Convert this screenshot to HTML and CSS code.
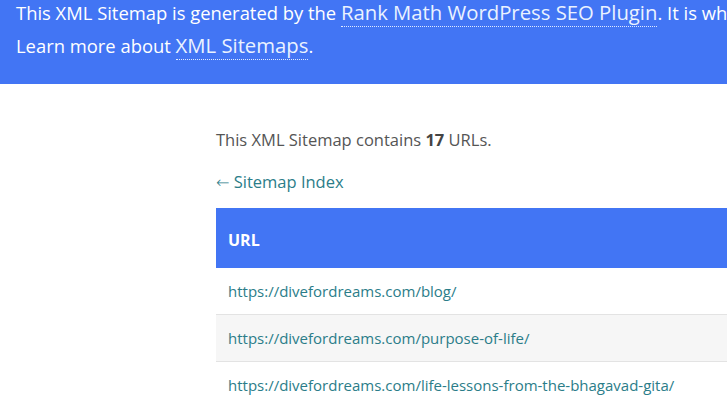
FILE: index.html
```
<!DOCTYPE html>
<html lang="en">
<head>
<meta charset="utf-8">
<title>XML Sitemap</title>
<link rel="stylesheet" href="styles.css">
</head>
<body>
<header class="description">
  <p class="desc-line">This XML Sitemap is generated by the <a class="desc-link" href="#">Rank Math WordPress SEO Plugin</a>. It is what search engines like Google use to crawl and re-crawl posts/pages/products/images/archives on your website.</p>
  <p class="desc-line">Learn more about <a class="desc-link" href="#">XML Sitemaps</a>.</p>
</header>
<main class="content">
  <p class="count">This XML Sitemap contains <strong class="count-num">17</strong> URLs.</p>
  <p class="back"><a class="back-link" href="#"><span class="arrow">&larr;</span> Sitemap Index</a></p>
  <table class="sitemap-table">
    <thead>
      <tr><th class="col-url">URL</th></tr>
    </thead>
    <tbody>
      <tr><td class="loc"><a class="loc-link" href="#">https://divefordreams.com/blog/</a></td></tr>
      <tr><td class="loc"><a class="loc-link" href="#">https://divefordreams.com/purpose-of-life/</a></td></tr>
      <tr><td class="loc"><a class="loc-link" href="#">https://divefordreams.com/life-lessons-from-the-bhagavad-gita/</a></td></tr>
    </tbody>
  </table>
</main>
</body>
</html>
```
FILE: styles.css
```
html {
  overflow: hidden;
}
body {
  margin: 0;
  font-family: "Open Sans", "Noto Sans", sans-serif;
  color: #555;
  background: #fff;
}
.description {
  box-sizing: border-box;
  height: 84px;
  padding: 0 16px;
  background: #4275f4;
  color: #fff;
  display: flex;
  flex-direction: column;
  gap: 8px;
  overflow: hidden;
}
.desc-line {
  margin: 0;
  font-size: 18.4px;
  line-height: 25px;
  white-space: nowrap;
}
.desc-link {
  color: #eaf2ff;
  font-size: 20.3px;
  text-decoration: none;
  border-bottom: 1px dotted #dfe9ff;
}
.content {
  padding: 44px 0 0 216px;
}
.count {
  margin: 0;
  font-size: 16.5px;
  line-height: 24px;
  color: #555;
}
.count-num {
  font-weight: 700;
  color: #444;
}
.back {
  margin: 18px 0 0;
  font-size: 16.5px;
  line-height: 24px;
}
.back-link {
  color: #2b7d89;
  text-decoration: none;
}
.arrow {
  font-family: "DejaVu Sans", sans-serif;
  font-size: 16px;
  font-weight: 300;
}
.sitemap-table {
  margin-top: 13px;
  width: 100%;
  border-collapse: collapse;
  border: none;
}
.col-url {
  background: #4275f4;
  color: #fff;
  text-align: left;
  font-size: 16px;
  font-weight: 700;
  line-height: 20px;
  padding: 22px 12px 18px;
}
.loc {
  padding: 13px 12px;
  font-size: 15px;
  line-height: 20px;
  border-bottom: 1px solid #e3e3e3;
}
.sitemap-table tbody tr:nth-child(even) {
  background: #f6f6f6;
}
.loc-link {
  color: #2b7d89;
  text-decoration: none;
  white-space: nowrap;
}
```
